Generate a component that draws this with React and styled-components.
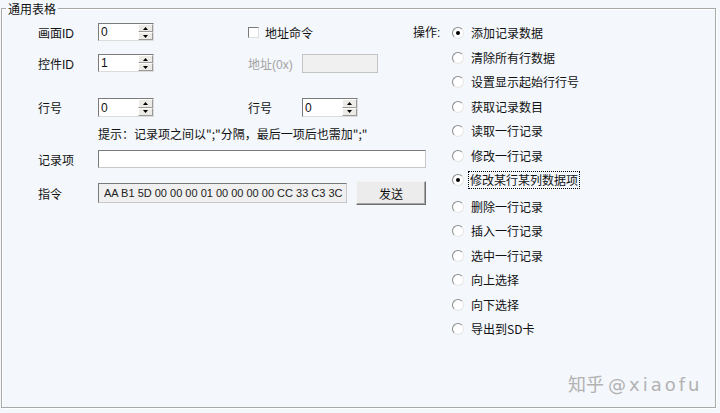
import styled, { createGlobalStyle } from "styled-components";

const GlobalStyle = createGlobalStyle`
  body {
    margin: 0;
    background: #f4f7fc;
    font-family: "Liberation Sans", "Noto Sans CJK SC", sans-serif;
    font-size: 12px;
    color: #111;
  }
`;

const operations = [
  "添加记录数据",
  "清除所有行数据",
  "设置显示起始行行号",
  "获取记录数目",
  "读取一行记录",
  "修改一行记录",
  "修改某行某列数据项",
  "删除一行记录",
  "插入一行记录",
  "选中一行记录",
  "向上选择",
  "向下选择",
  "导出到SD卡",
];

const Spinner = ({ value }) => (
  <SpinBox>
    <SpinText value={value} readOnly />
    <SpinButtons>
      <SpinButton>
        <svg width="5" height="3" viewBox="0 0 5 3">
          <path d="M2.5 0 L5 3 L0 3 Z" fill="#000" />
        </svg>
      </SpinButton>
      <SpinButton>
        <svg width="5" height="3" viewBox="0 0 5 3">
          <path d="M0 0 L5 0 L2.5 3 Z" fill="#000" />
        </svg>
      </SpinButton>
    </SpinButtons>
  </SpinBox>
);

const App = () => {
  return (
    <>
      <GlobalStyle />
      <Page>
        <GroupBox>
          <Legend>通用表格</Legend>
          <FormPanel>
            <Row top={0} height={18}>
              <Label>画面ID</Label>
              <Spinner value="0" />
              <CheckWrap>
                <CheckBox />
                <span>地址命令</span>
              </CheckWrap>
            </Row>
            <Row top={13} height={18}>
              <Label>控件ID</Label>
              <Spinner value="1" />
              <SubLabel disabled>地址(0x)</SubLabel>
              <TextField width={76} height={19} disabled readOnly />
            </Row>
            <Row top={26} height={19}>
              <Label>行号</Label>
              <Spinner value="0" />
              <SubLabel>行号</SubLabel>
              <Spinner value="0" />
            </Row>
            <Row top={8} height={16}>
              <Label />
              <Hint>提示：记录项之间以";"分隔，最后一项后也需加";"</Hint>
            </Row>
            <Row top={9} height={18}>
              <Label>记录项</Label>
              <TextField width={328} height={18} readOnly />
            </Row>
            <Row top={13} height={24}>
              <Label>指令</Label>
              <TextField
                width={249}
                height={20}
                gray
                readOnly
                value="AA B1 5D 00 00 00 01 00 00 00 00 CC 33 C3 3C"
              />
              <Button>发送</Button>
            </Row>
          </FormPanel>
          <OpsPanel>
            <OpsLabel>操作:</OpsLabel>
            <RadioList>
              {operations.map((op, i) => (
                <RadioRow key={op} extra={i === 7}>
                  <Radio checked={i === 0 || i === 6} />
                  <RadioText focused={i === 6}>{op}</RadioText>
                </RadioRow>
              ))}
            </RadioList>
          </OpsPanel>
          <Watermark>
            知乎 <Handle>@xiaofu</Handle>
          </Watermark>
        </GroupBox>
      </Page>
    </>
  );
};

export default App;

const Page = styled.div`
  width: 720px;
  height: 413px;
  padding: 8px 0 0 1px;
  box-sizing: border-box;
`;

const GroupBox = styled.div`
  position: relative;
  width: 715px;
  height: 400px;
  box-sizing: border-box;
  border: 1px solid #a9a9a9;
  box-shadow: inset 1px 1px 0 #fff, 1px 1px 0 #fff;
  display: flex;
  padding-left: 36px;
`;

const Legend = styled.div`
  position: absolute;
  top: -9px;
  left: 4px;
  padding: 0 2px;
  line-height: 17px;
  background: #f4f7fc;
  font-family: "Noto Sans CJK SC", sans-serif;
`;

const FormPanel = styled.div`
  width: 375px;
  flex-shrink: 0;
  display: flex;
  flex-direction: column;
  padding-top: 14px;
`;

const Row = styled.div`
  display: flex;
  align-items: center;
  height: ${(p) => p.height}px;
  margin-top: ${(p) => p.top}px;
  white-space: nowrap;
`;

const Label = styled.div`
  width: 60px;
  flex-shrink: 0;
`;

const SubLabel = styled.div`
  width: 54px;
  margin-left: 94px;
  flex-shrink: 0;
  color: ${(p) => (p.disabled ? "#a3a3a3" : "#111")};
`;

const SpinBox = styled.div`
  display: flex;
  width: 56px;
  height: 100%;
  box-sizing: border-box;
  border: 1px solid;
  border-color: #7b7b7b #dcdcdc #dcdcdc #7b7b7b;
  background: #fff;
  flex-shrink: 0;
`;

const SpinText = styled.input`
  flex: 1;
  min-width: 0;
  border: none;
  outline: none;
  padding: 0 0 0 2px;
  font: inherit;
  color: #111;
  background: transparent;
`;

const SpinButtons = styled.div`
  display: flex;
  flex-direction: column;
  width: 15px;
`;

const SpinButton = styled.div`
  flex: 1;
  display: flex;
  align-items: center;
  justify-content: center;
  background: #ecebe6;
  border: 1px solid;
  border-color: #fff #9a9a9a #9a9a9a #fff;
`;

const CheckWrap = styled.div`
  display: flex;
  align-items: center;
  gap: 6px;
  margin-left: 94px;
`;

const CheckBox = styled.div`
  width: 11px;
  height: 11px;
  box-sizing: border-box;
  background: #fff;
  border: 1px solid;
  border-color: #7a7a7a #e0e0e0 #e0e0e0 #7a7a7a;
`;

const TextField = styled.input`
  width: ${(p) => p.width}px;
  height: ${(p) => p.height}px;
  box-sizing: border-box;
  flex-shrink: 0;
  border: 1px solid;
  border-color: ${(p) =>
    p.disabled ? "#c4c4c4" : "#7a7a7a #c8c8c8 #c8c8c8 #7a7a7a"};
  background: ${(p) => (p.gray || p.disabled ? "#f0f0f0" : "#fff")};
  font: 11px "Liberation Sans", sans-serif;
  color: #222;
  padding: 0 0 0 5px;
  outline: none;
`;

const Hint = styled.div`
  font-family: "Noto Sans CJK SC", sans-serif;
`;

const Button = styled.div`
  width: 70px;
  height: 24px;
  margin-left: 9px;
  box-sizing: border-box;
  flex-shrink: 0;
  display: flex;
  align-items: center;
  justify-content: center;
  background: #ececec;
  border: 1px solid;
  border-color: #f4f4f4 #6e6e6e #6e6e6e #f4f4f4;
  box-shadow: inset -1px -1px 0 #a6a6a6;
`;

const OpsPanel = styled.div`
  display: flex;
  padding-top: 12px;
`;

const OpsLabel = styled.div`
  width: 39px;
  line-height: 24px;
`;

const RadioList = styled.div`
  display: flex;
  flex-direction: column;
`;

const RadioRow = styled.div`
  display: flex;
  align-items: center;
  height: 24.5px;
  margin-top: ${(p) => (p.extra ? 2 : 0)}px;
`;

const Radio = styled.div`
  position: relative;
  width: 12px;
  height: 12px;
  box-sizing: border-box;
  border-radius: 50%;
  background: #fff;
  border: 1px solid;
  border-color: #8a8a8a #e6e6e6 #e6e6e6 #8a8a8a;
  margin-right: 6px;

  &::after {
    content: "";
    display: ${(p) => (p.checked ? "block" : "none")};
    position: absolute;
    left: 3px;
    top: 3px;
    width: 4px;
    height: 4px;
    border-radius: 50%;
    background: #000;
  }
`;

const RadioText = styled.div`
  font-family: "Noto Sans CJK SC", sans-serif;
  padding: 0 1px;
  margin-left: ${(p) => (p.focused ? -2 : 0)}px;
  border: ${(p) => (p.focused ? "1px dotted #000" : "none")};
  line-height: 16px;
`;

const Watermark = styled.div`
  position: absolute;
  left: 566px;
  top: 363px;
  font: 18px "Noto Sans CJK SC", sans-serif;
  line-height: 22px;
  color: #b2b2b2;
  white-space: nowrap;
`;

const Handle = styled.span`
  font-family: "DejaVu Sans", sans-serif;
  letter-spacing: 3px;
`;
